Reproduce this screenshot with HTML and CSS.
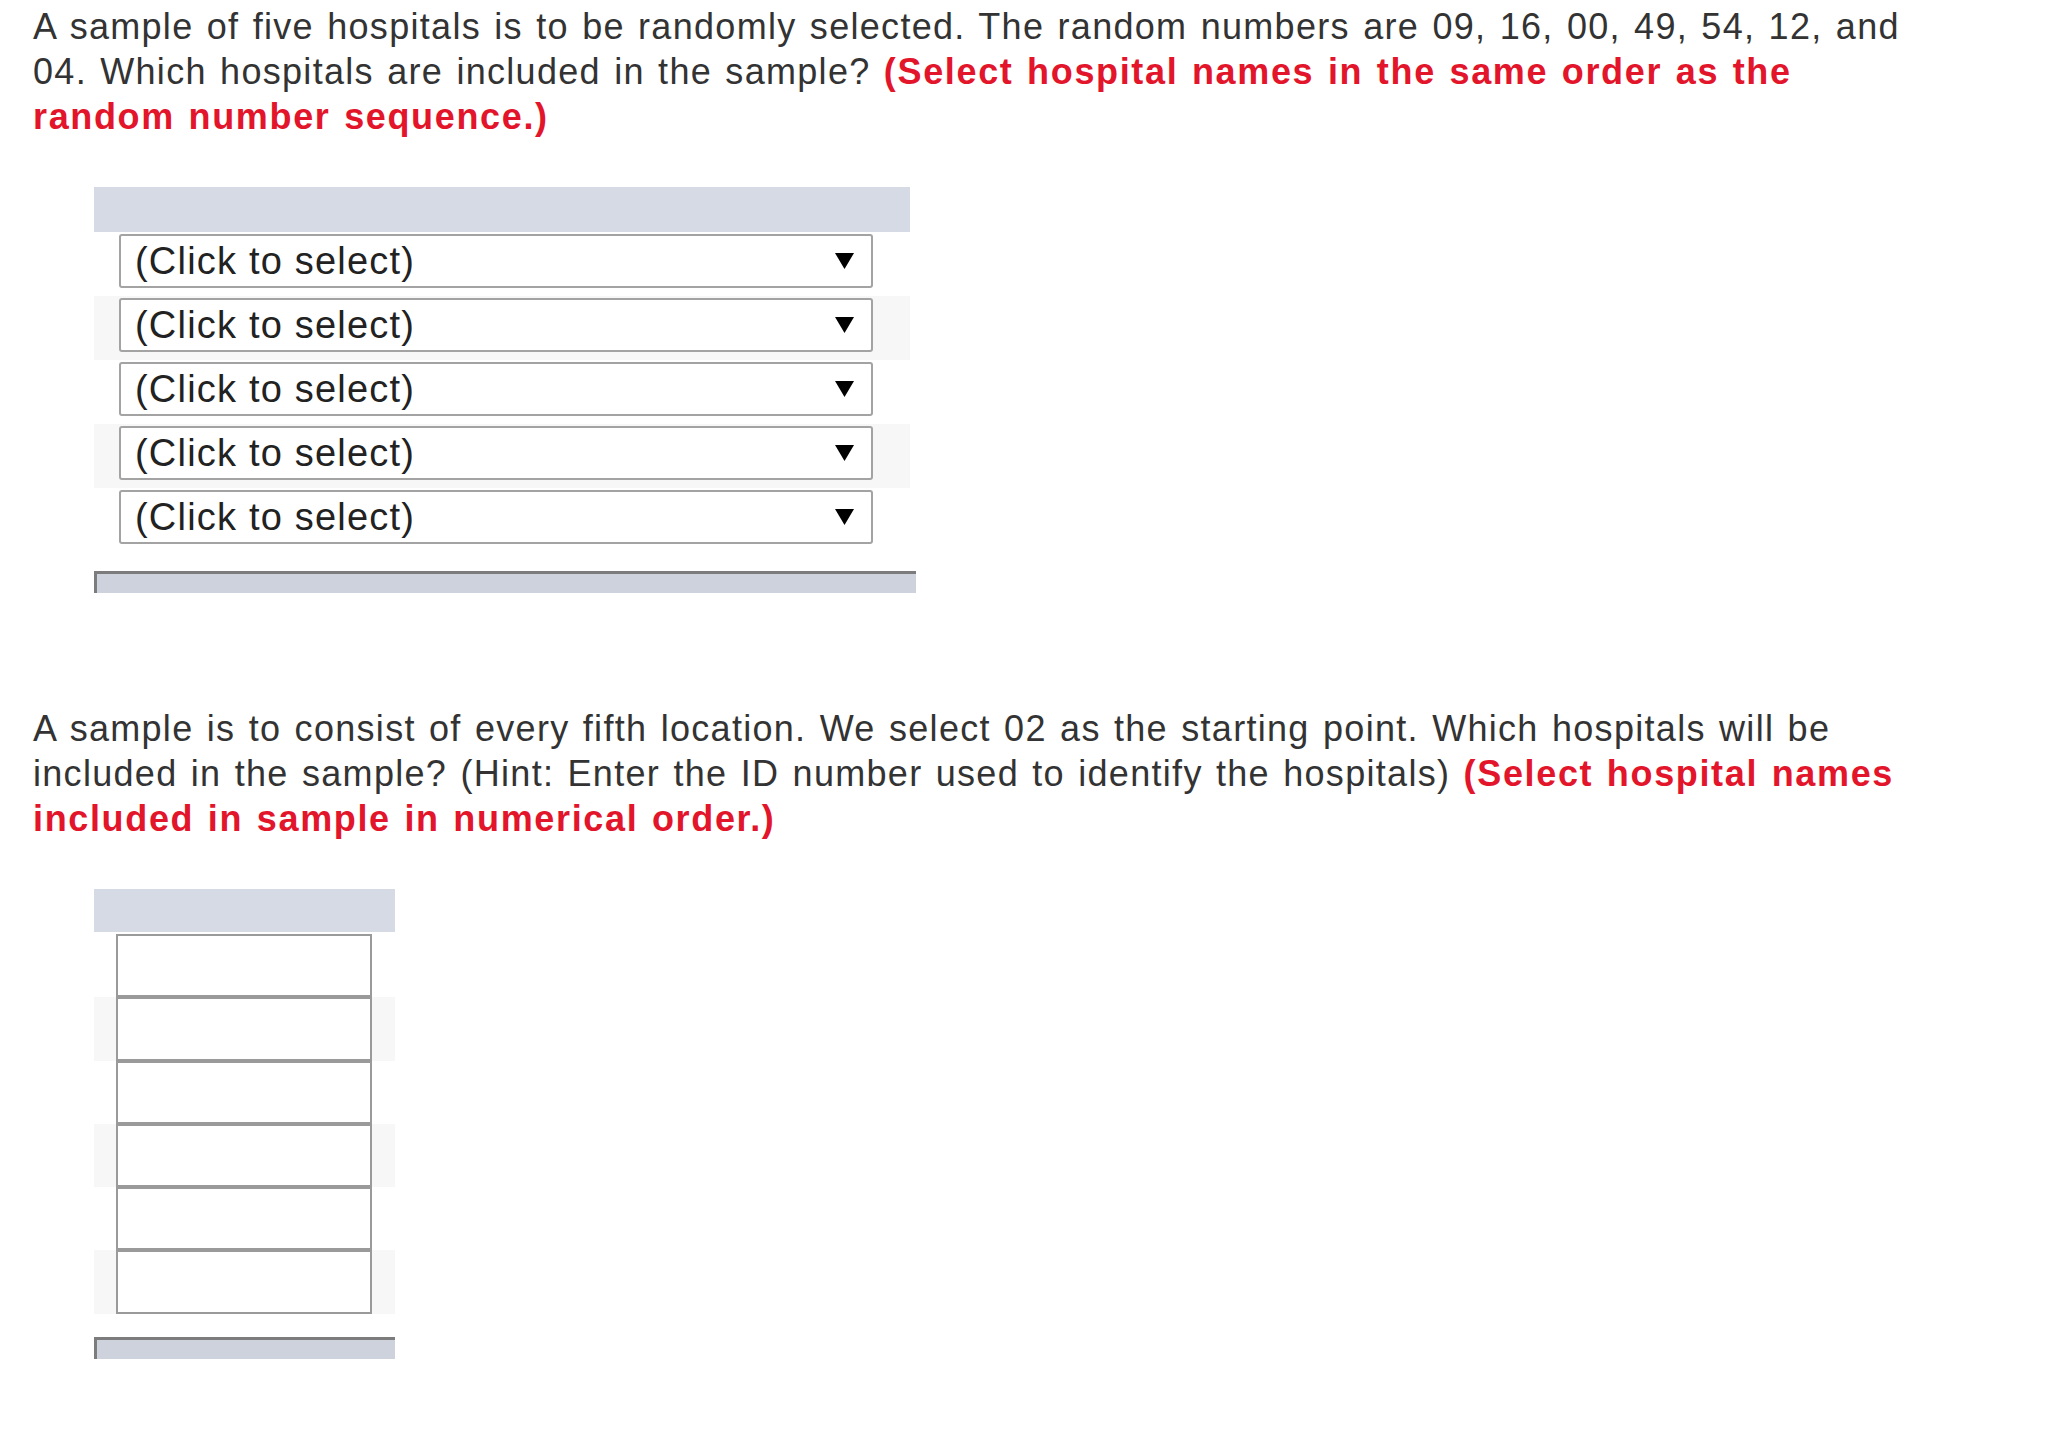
FILE: index.html
```html
<!DOCTYPE html>
<html lang="en">
<head>
    <meta charset="UTF-8">
    <meta name="viewport" content="width=device-width, initial-scale=1.0">
    <title>Hospital sample</title>
    <link rel="stylesheet" href="styles.css">
</head>
<body>
    <div class="page">
        <p class="question">A sample of five hospitals is to be randomly selected. The random numbers are 09, 16, 00, 49, 54, 12, and 04. Which hospitals are included in the sample? <b class="note">(Select hospital names in the same order as the random number sequence.)</b></p>

        <div class="answer answer-select">
            <div class="head"></div>
            <div class="row"><div class="select"><span>(Click to select)</span><svg class="arrow" width="19" height="16" viewBox="0 0 19 16"><path d="M0 0H19L9.5 16Z" fill="#000"/></svg></div></div>
            <div class="row alt"><div class="select"><span>(Click to select)</span><svg class="arrow" width="19" height="16" viewBox="0 0 19 16"><path d="M0 0H19L9.5 16Z" fill="#000"/></svg></div></div>
            <div class="row"><div class="select"><span>(Click to select)</span><svg class="arrow" width="19" height="16" viewBox="0 0 19 16"><path d="M0 0H19L9.5 16Z" fill="#000"/></svg></div></div>
            <div class="row alt"><div class="select"><span>(Click to select)</span><svg class="arrow" width="19" height="16" viewBox="0 0 19 16"><path d="M0 0H19L9.5 16Z" fill="#000"/></svg></div></div>
            <div class="row"><div class="select"><span>(Click to select)</span><svg class="arrow" width="19" height="16" viewBox="0 0 19 16"><path d="M0 0H19L9.5 16Z" fill="#000"/></svg></div></div>
            <div class="foot"></div>
        </div>

        <p class="question second">A sample is to consist of every fifth location. We select 02 as the starting point. Which hospitals will be included in the sample? (Hint: Enter the ID number used to identify the hospitals) <b class="note">(Select hospital names included in sample in numerical order.)</b></p>

        <div class="answer answer-input">
            <div class="head"></div>
            <div class="body">
                <div class="row"><input type="text"></div>
                <div class="row alt"><input type="text"></div>
                <div class="row"><input type="text"></div>
                <div class="row alt"><input type="text"></div>
                <div class="row"><input type="text"></div>
                <div class="row alt"><input type="text"></div>
            </div>
            <div class="foot"></div>
        </div>
    </div>
</body>
</html>
```

FILE: styles.css
```css
*{
    margin: 0;
    padding: 0;
    box-sizing: border-box;
}
body{
    background-color: #fff;
    font-family: "Liberation Sans", Arial, sans-serif;
}
.page{
    width: 1925px;
    padding: 4px 0 40px 33px;
}
.question{
    font-size: 36px;
    line-height: 45px;
    letter-spacing: 1.3px;
    word-spacing: 2px;
    color: #333;
}
.question .note{
    color: #e2152b;
    letter-spacing: 1.65px;
}
.question.second{
    margin-top: 113px;
}
.answer{
    margin: 48px 0 0 61px;
}
.answer .head{
    height: 45px;
    background-color: #d6dae4;
}
.answer .row.alt{
    background-color: #f7f7f7;
}
.answer .foot{
    height: 22px;
    margin-top: 19px;
    background-color: #cdd2dc;
    border-top: 3px solid #7c7c7c;
    border-left: 3px solid #7c7c7c;
}

/* dropdowns */
.answer-select{
    width: 816px;
}
.answer-select .row{
    height: 64px;
    padding: 2px 0 0 25px;
}
.answer-select .foot{
    width: 822px;
}
.select{
    width: 754px;
    height: 54px;
    border: 2px solid #a3a3a3;
    border-radius: 3px;
    background-color: #fff;
    display: flex;
    align-items: center;
    justify-content: space-between;
    padding: 0 17px 0 14px;
    font-size: 38px;
    letter-spacing: 1.2px;
    color: #222;
}
.select .arrow{
    display: block;
}

/* text boxes */
.answer-input{
    width: 301px;
}
.answer-input .head{
    height: 43px;
}
.answer-input .body{
    padding-top: 2px;
}
.answer-input .row{
    height: 63.3px;
    padding-left: 22px;
}
.answer-input input{
    display: block;
    width: 256px;
    height: 100%;
    border: 2px solid #9a9a9a;
    background-color: #fff;
    font-size: 30px;
    font-family: "Liberation Sans", Arial, sans-serif;
}
.answer-input .foot{
    margin-top: 23px;
}
```
